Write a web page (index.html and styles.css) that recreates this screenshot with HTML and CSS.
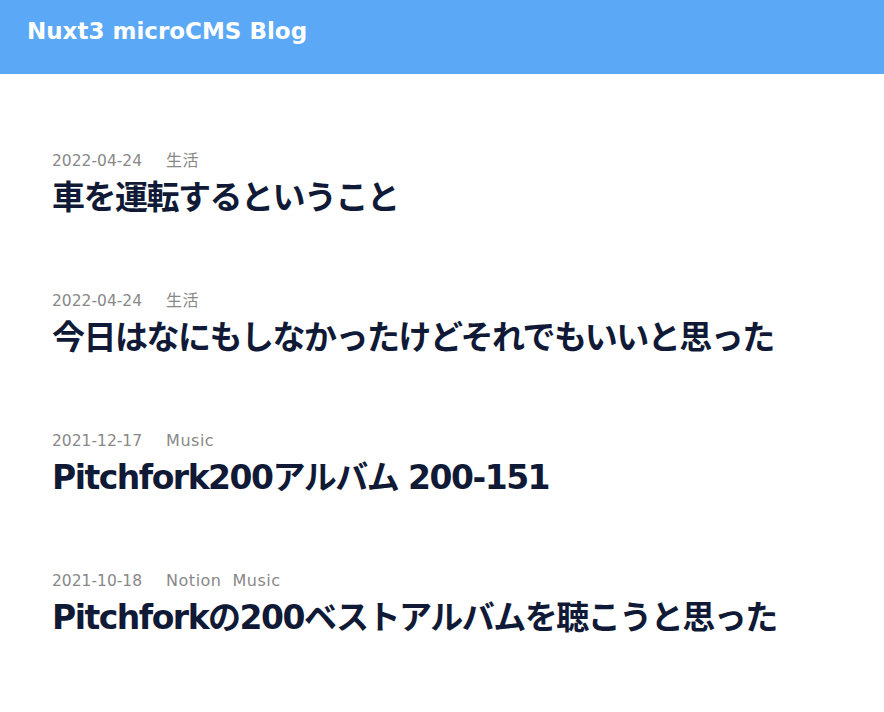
FILE: index.html
```html
<!DOCTYPE html>
<html lang="ja">
<head>
<meta charset="utf-8">
<title>Nuxt3 microCMS Blog</title>
<link rel="stylesheet" href="styles.css">
</head>
<body>
<header class="site-header">
  <a class="site-title" href="#">Nuxt3 microCMS Blog</a>
</header>
<main class="posts">
  <article class="post">
    <div class="meta"><span class="date">2022-04-24</span><span class="cats"><span class="cat">生活</span></span></div>
    <h2 class="post-title">車を運転するということ</h2>
  </article>
  <article class="post">
    <div class="meta"><span class="date">2022-04-24</span><span class="cats"><span class="cat">生活</span></span></div>
    <h2 class="post-title">今日はなにもしなかったけどそれでもいいと思った</h2>
  </article>
  <article class="post">
    <div class="meta"><span class="date">2021-12-17</span><span class="cats"><span class="cat">Music</span></span></div>
    <h2 class="post-title">Pitchfork200アルバム 200-151</h2>
  </article>
  <article class="post">
    <div class="meta"><span class="date">2021-10-18</span><span class="cats"><span class="cat">Notion</span><span class="cat">Music</span></span></div>
    <h2 class="post-title">Pitchforkの200ベストアルバムを聴こうと思った</h2>
  </article>
</main>
</body>
</html>
```
FILE: styles.css
```css
* { box-sizing: border-box; }
html, body { margin: 0; padding: 0; }
body {
  font-family: "DejaVu Sans", "Noto Sans CJK JP", sans-serif;
  background: #fff;
  color: #101a36;
}
.site-header {
  height: 74px;
  background: #5ba8f6;
  padding: 16px 27px 0;
}
.site-title {
  color: #fff;
  text-decoration: none;
  font-weight: bold;
  font-size: 23px;
  line-height: 30px;
  display: block;
}
.posts {
  padding: 77px 52px 0;
  display: flex;
  flex-direction: column;
  gap: 71px;
}
.post { display: flex; flex-direction: column; gap: 5px; }
.meta {
  display: flex;
  align-items: baseline;
  gap: 24px;
  line-height: 20px;
  color: #888;
}
.date { font-size: 15.5px; }
.cats {
  display: flex;
  gap: 11px;
  font-size: 16px;
  letter-spacing: 0.5px;
}
.post-title {
  margin: 0;
  font-size: 33px;
  letter-spacing: -1.5px;
  line-height: 44px;
  font-weight: bold;
  color: #101a36;
}
```
